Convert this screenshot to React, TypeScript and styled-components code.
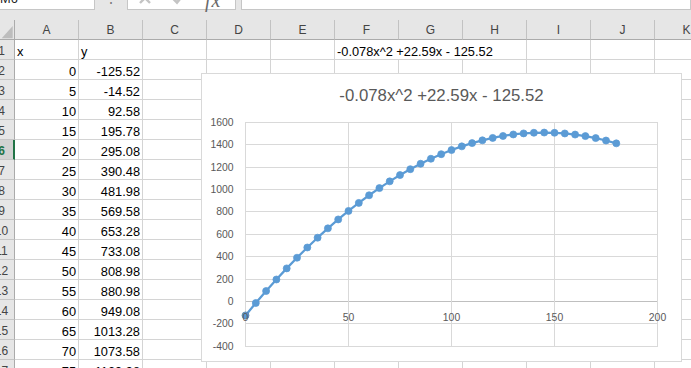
import React from "react";
import styled, { createGlobalStyle } from "styled-components";

const GlobalStyle = createGlobalStyle`
  html, body {
    margin: 0;
    padding: 0;
    background: #fff;
    overflow: hidden;
  }
  body {
    font-family: "Liberation Sans", Arial, sans-serif;
  }
`;

const COLS = ["A", "B", "C", "D", "E", "F", "G", "H", "I", "J", "K"];
const FORMULA = "-0.078x^2 +22.59x - 125.52";
const fy = (x: number) => -0.078 * x * x + 22.59 * x - 125.52;
const tableXs = Array.from({ length: 16 }, (_, i) => i * 5);
const chartXs = Array.from({ length: 37 }, (_, i) => i * 5);

// chart scale, in page pixels (svg viewBox matches the page)
const X = (u: number) => 245.5 + u * 2.06;
const Y = (v: number) => 122.5 + (1600 - v) * 0.1118;
const crisp = (n: number) => Math.floor(n) + 0.5;
const yTicks = [1600, 1400, 1200, 1000, 800, 600, 400, 200, 0, -200, -400];
const xTicks = [0, 50, 100, 150, 200];

const Workbook = styled.div`
  position: relative;
  width: 691px;
  height: 368px;
  overflow: hidden;
  background: #fff;
`;

const FormulaStrip = styled.div`
  height: 20px;
  background: #e6e6e6;
  overflow: hidden;
`;

const FormulaRow = styled.div`
  display: flex;
  height: 24px;
  margin-top: -14px;
`;

const NameBox = styled.div`
  width: 99px;
  margin-left: -4px;
  box-sizing: border-box;
  background: #fff;
  border: 1px solid #c6c6c6;
  display: flex;
  align-items: center;
  padding-left: 3px;
  font-size: 12.8px;
  color: #222;
`;

const MoreDots = styled.div`
  width: 32px;
  display: flex;
  align-items: center;
  justify-content: center;
  color: #777;
  font-size: 14px;
`;

const CommandBox = styled.div`
  width: 109px;
  box-sizing: border-box;
  background: #fff;
  border: 1px solid #c6c6c6;
  display: flex;
  align-items: center;
  padding-left: 10px;
  gap: 19px;
`;

const FxLabel = styled.span`
  font-family: "Liberation Serif", "Times New Roman", serif;
  font-style: italic;
  font-size: 20px;
  color: #6a6a6a;
  letter-spacing: 1px;
  margin-top: 4px;
`;

const FormulaInput = styled.div`
  flex: 1;
  margin-left: 5px;
  background: #fff;
  border: 1px solid #c6c6c6;
`;

const Sheet = styled.div`
  display: grid;
  grid-template-columns: 15px repeat(11, 64px);
  grid-auto-rows: 20px;
`;

const Corner = styled.div`
  background: #e6e6e6;
  border-right: 1px solid #ababab;
  border-bottom: 1px solid #ababab;
  box-sizing: border-box;
  position: relative;
  & svg {
    display: block;
  }
`;

const ColHead = styled.div`
  background: #e6e6e6;
  box-sizing: border-box;
  border-right: 1px solid #c2c2c2;
  border-bottom: 1px solid #ababab;
  display: flex;
  align-items: center;
  justify-content: center;
  font-size: 12px;
  color: #444;
`;

const RowHead = styled.div<{ $active?: boolean }>`
  background: ${(p) => (p.$active ? "#d2d2d2" : "#e6e6e6")};
  box-sizing: border-box;
  border-bottom: 1px solid #c6c6c6;
  border-right: ${(p) => (p.$active ? "2px solid #217346" : "1px solid #ababab")};
  display: flex;
  align-items: flex-end;
  overflow: hidden;
  font-size: 12px;
  line-height: 15px;
  color: ${(p) => (p.$active ? "#217346" : "#444")};
  font-weight: ${(p) => (p.$active ? 700 : 400)};
  & span {
    flex-shrink: 0;
    width: 27px;
    margin-left: -12px;
    text-align: center;
  }
`;

const Cell = styled.div<{ $right?: boolean; $span?: number }>`
  grid-column: span ${(p) => p.$span ?? 1};
  box-sizing: border-box;
  border-right: 1px solid #d4d4d4;
  border-bottom: 1px solid #d4d4d4;
  display: flex;
  align-items: flex-end;
  justify-content: ${(p) => (p.$right ? "flex-end" : "flex-start")};
  padding: 0 2px;
  font-size: 12.8px;
  line-height: 15px;
  color: #000;
  white-space: nowrap;
`;

const ChartBox = styled.div`
  position: absolute;
  left: 201px;
  top: 73px;
  width: 481px;
  height: 289px;
  box-sizing: border-box;
  border: 1px solid #d9d9d9;
  background: #fff;
  display: flex;
  flex-direction: column;
`;

const ChartTitle = styled.div`
  padding-top: 12px;
  height: 20px;
  line-height: 20px;
  text-align: center;
  font-size: 16.8px;
  color: #595959;
  white-space: nowrap;
`;

const Plot = styled.svg`
  display: block;
  width: 479px;
  height: 254px;
  & text {
    font-family: "Liberation Sans", Arial, sans-serif;
    font-size: 10.4px;
    fill: #595959;
  }
`;

const XIcon = () => (
  <svg width="14" height="14" viewBox="0 0 14 14">
    <path d="M2 2 L12 12 M12 2 L2 12" stroke="#c4c4c4" strokeWidth="2.4" fill="none" />
  </svg>
);

const CheckIcon = () => (
  <svg width="15" height="14" viewBox="0 0 15 14" style={{ marginTop: 2 }}>
    <path d="M1.5 6 L6 10.5 L13.5 1.5" stroke="#c4c4c4" strokeWidth="2.6" fill="none" />
  </svg>
);

const Chart = () => {
  const pts = chartXs.map((u) => [X(u), Y(fy(u))]);
  return (
    <ChartBox>
      <ChartTitle>{FORMULA}</ChartTitle>
      <Plot viewBox="202 106 479 254">
        {yTicks.map((v) => (
          <line
            key={"h" + v}
            x1={245}
            x2={658}
            y1={crisp(Y(v))}
            y2={crisp(Y(v))}
            stroke={v === 0 ? "#bfbfbf" : "#d9d9d9"}
            strokeWidth={1}
          />
        ))}
        {xTicks.map((u) => (
          <line
            key={"v" + u}
            x1={crisp(X(u))}
            x2={crisp(X(u))}
            y1={crisp(Y(1600))}
            y2={crisp(Y(-400))}
            stroke="#d9d9d9"
            strokeWidth={1}
          />
        ))}
        <polyline
          points={pts.map((p) => p.join(",")).join(" ")}
          fill="none"
          stroke="#5b9bd5"
          strokeWidth={2.25}
          strokeLinejoin="round"
          strokeLinecap="round"
        />
        {pts.map(([cx, cy], i) => (
          <circle
            key={i}
            cx={cx}
            cy={cy}
            r={3.5}
            fill="#5b9bd5"
            stroke={i === 0 ? "#5a7fa3" : "#5b9bd5"}
            strokeWidth={0.75}
          />
        ))}
        {yTicks.map((v) => (
          <text key={"yl" + v} x={233.5} y={crisp(Y(v)) + 3.4} textAnchor="end">
            {v}
          </text>
        ))}
        {xTicks.map((u) => (
          <text key={"xl" + u} x={X(u)} y={320.7} textAnchor="middle">
            {u}
          </text>
        ))}
      </Plot>
    </ChartBox>
  );
};

export default function App() {
  return (
    <Workbook>
      <GlobalStyle />
      <FormulaStrip>
        <FormulaRow>
          <NameBox>M6</NameBox>
          <MoreDots>⋮</MoreDots>
          <CommandBox>
            <XIcon />
            <CheckIcon />
            <FxLabel>fx</FxLabel>
          </CommandBox>
          <FormulaInput />
        </FormulaRow>
      </FormulaStrip>

      <Sheet>
        <Corner>
          <svg width="14" height="19" viewBox="0 0 14 19">
            <polygon points="12.7,6 12.7,18.3 1.7,18.3" fill="#bdbdbd" />
          </svg>
        </Corner>
        {COLS.map((c) => (
          <ColHead key={c}>{c}</ColHead>
        ))}

        <RowHead>
          <span>1</span>
        </RowHead>
        <Cell>x</Cell>
        <Cell>y</Cell>
        <Cell />
        <Cell />
        <Cell />
        <Cell $span={3}>{FORMULA}</Cell>
        <Cell />
        <Cell />
        <Cell />

        {tableXs.map((x, i) => {
          const row = i + 2;
          return (
            <React.Fragment key={row}>
              <RowHead $active={row === 6}>
                <span>{row}</span>
              </RowHead>
              <Cell $right>{x}</Cell>
              <Cell $right>{fy(x).toFixed(2)}</Cell>
              {COLS.slice(2).map((c) => (
                <Cell key={c} />
              ))}
            </React.Fragment>
          );
        })}
      </Sheet>

      <Chart />
    </Workbook>
  );
}
